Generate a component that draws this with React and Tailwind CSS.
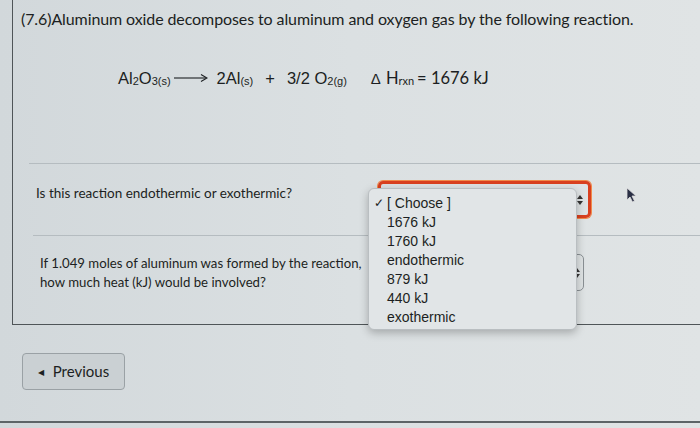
import React from 'react';

const options = ['1676 kJ', '1760 kJ', 'endothermic', '879 kJ', '440 kJ', 'exothermic'];

const Spinner = () => (
  <svg width="8" height="14" viewBox="0 0 8 14" className="text-[#333]">
    <path d="M1 6 L4 2 L7 6 Z" fill="currentColor" />
    <path d="M1 8 L4 12 L7 8 Z" fill="currentColor" />
  </svg>
);

const App = () => {
  return (
    <div
      className="relative w-[700px] h-[428px] overflow-hidden bg-gradient-to-r from-[#d2d8db] via-[#dbe0e2] to-[#e0e4e5] text-[#1c1f22]"
      style={{ fontFamily: 'Lato, "Open Sans", sans-serif' }}
    >
      {/* question panel */}
      <div className="ml-[12px] h-[325px] border-l border-b border-[#4f5558] flex flex-col">
        <p className="pt-[9px] pl-[8px] text-[16px] leading-[20px] tracking-[-0.1px]">
          (7.6)Aluminum oxide decomposes to aluminum and oxygen gas by the following reaction.
        </p>

        <div className="mt-[37px] pl-[105px] flex items-baseline h-[20px] text-[16.5px]">
          <span style={{ fontFamily: '"Liberation Sans", Arial, sans-serif' }} className="flex items-baseline">
            <span>Al</span>
            <sub className="text-[11px] relative top-[1px]">2</sub>
            <span>O</span>
            <sub className="text-[11px] relative top-[1px]">3(s)</sub>
            <svg className="mx-[3px] self-center" width="34" height="10" viewBox="0 0 34 10">
              <path d="M0 5 H32" stroke="currentColor" strokeWidth="1.1" />
              <path d="M27 1.5 L33 5 L27 8.5" stroke="currentColor" strokeWidth="1.1" fill="none" />
            </svg>
            <span className="ml-[6px]">2Al</span>
            <sub className="text-[11px] relative top-[1px]">(s)</sub>
            <span className="ml-[12px] mr-[12px]">+</span>
            <span>3/2 O</span>
            <sub className="text-[11px] relative top-[1px]">2(g)</sub>
          </span>
          <span className="ml-[24px] flex items-baseline">
            <span className="mr-[5px] text-[15px]" style={{ fontFamily: '"Liberation Sans", Arial, sans-serif' }}>Δ</span>
            <span>H</span>
            <sub className="text-[11px] relative top-[1px]">rxn</sub>
            <span className="ml-[3px]">= 1676 kJ</span>
          </span>
        </div>

        <div className="mt-[77px] ml-[16px] border-t border-[#b5bcc0] h-[72px] flex items-center">
          <span className="pl-[7px] text-[13.5px] -mt-[12px]">Is this reaction endothermic or exothermic?</span>
          <div className="ml-auto mr-[109px] w-[213px] h-[37px] rounded-[5px] border-[3px] border-[#d9401f] shadow-[0_0_0_1px_#f08a4b] flex items-center justify-end pr-[4px]">
            <Spinner />
          </div>
        </div>

        <div className="ml-[20px] border-t border-[#b5bcc0] flex-1 flex">
          <div className="pt-[18px] pl-[7px] text-[13.2px] leading-[19px]">
            <div>If 1.049 moles of aluminum was formed by the reaction,</div>
            <div>how much heat (kJ) would be involved?</div>
          </div>
          <div className="ml-auto mr-[116px] mt-[18px] w-[160px] h-[37px] rounded-[5px] border border-[#8a9094] flex items-center justify-end pr-[2px]">
            <Spinner />
          </div>
        </div>
      </div>

      <div className="mt-[28px] ml-[22px] w-[103px] h-[37px] rounded-[4px] border border-[#9aa1a5] bg-[#cad0d3] flex items-center justify-center gap-[9px] text-[15px]">
        <span className="text-[8px]">◀</span>
        <span>Previous</span>
      </div>

      <div className="absolute left-0 right-0 top-[421px] border-t-2 border-[#5d6467]" />

      {/* open dropdown */}
      <div
        className="absolute left-[368px] top-[188px] w-[209px] h-[142px] rounded-[6px] bg-[#e1e5e7] border border-[#b9bec1] shadow-[0_3px_8px_rgba(0,0,0,0.25)] pt-[5px] text-[14px] leading-[19px]"
        style={{ fontFamily: '"Liberation Sans", Arial, sans-serif' }}
      >
        <div className="flex">
          <span className="w-[18px] pl-[5px] text-[12px]">✓</span>
          <span>[ Choose ]</span>
        </div>
        {options.map((o) => (
          <div key={o} className="pl-[18px]">{o}</div>
        ))}
      </div>

      {/* mouse cursor */}
      <svg className="absolute left-[626px] top-[187px]" width="12" height="16" viewBox="0 0 12 16">
        <path d="M1 1 L1 13 L4 10 L6.5 15 L8.5 14 L6 9 L10 9 Z" fill="#2a2f45" stroke="#ddd" strokeWidth="0.8" />
      </svg>
    </div>
  );
};

export default App;
